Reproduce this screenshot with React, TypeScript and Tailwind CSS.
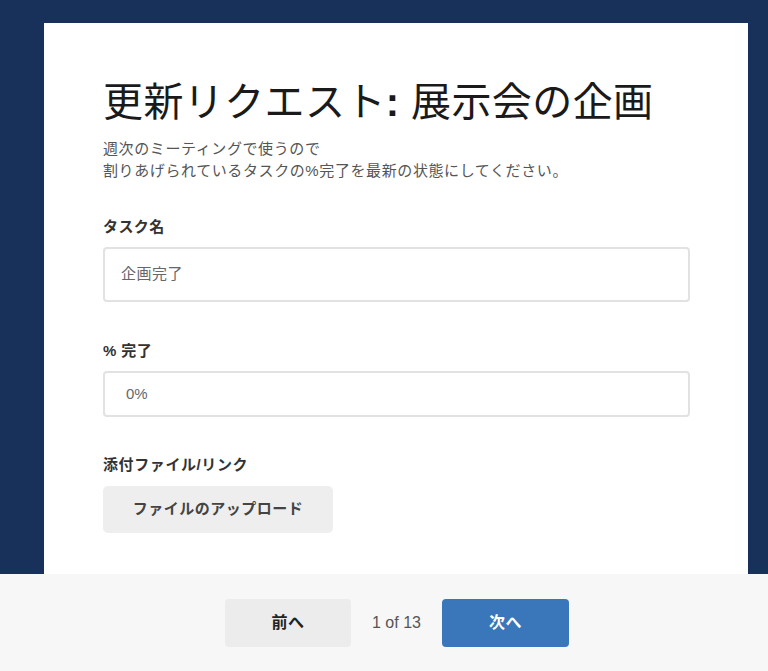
import React from "react";

const font = "font-['Liberation_Sans','Noto_Sans_CJK_JP',sans-serif]";

export default function App() {
  return (
    <div className={`h-[671px] w-full flex flex-col bg-[#17315a] overflow-hidden ${font}`}>
      <div className="flex-1 min-h-0 pt-[23px] pl-[44px] pr-[20px]">
        <div className="h-full w-[704px] bg-white pl-[59px] pr-[58px] pt-[55px]">
          <h1 className="text-[40px] leading-[48px] font-normal text-[#1a1a1a] tracking-[0.4px]">
            更新リクエスト<span className="font-bold">:</span> 展示会の企画
          </h1>
          <p className="mt-[12px] text-[15px] leading-[22px] text-[#555] tracking-[0.6px]">
            週次のミーティングで使うので
            <br />
            割りあげられているタスクの%完了を最新の状態にしてください。
          </p>

          <div className="mt-[34px] text-[15px] leading-[22px] font-bold text-[#333] tracking-[0.4px]">タスク名</div>
          <div className="mt-[9px] h-[55px] border-2 border-[#e2e2e2] rounded-[4px] flex items-center pl-[16px] text-[15px] text-[#66676b] tracking-[0.5px]">
            企画完了
          </div>

          <div className="mt-[38px] text-[15px] leading-[22px] font-bold text-[#333] tracking-[0.4px]">% 完了</div>
          <div className="mt-[9px] h-[46px] border-2 border-[#e2e2e2] rounded-[4px] flex items-center pl-[21px] text-[15px] text-[#66676b]">
            0%
          </div>

          <div className="mt-[37px] text-[15px] leading-[22px] font-bold text-[#333] tracking-[0.6px]">添付ファイル/リンク</div>
          <button className="mt-[10px] w-[230px] h-[47px] bg-[#eeeeee] rounded-[5px] text-[15px] font-bold text-[#444] tracking-[0.5px]">
            ファイルのアップロード
          </button>
        </div>
      </div>
      <div className="h-[97px] shrink-0 bg-[#f7f7f7] flex items-center pl-[225px] gap-[21px]">
        <button className="w-[126px] h-[48px] bg-[#ececec] rounded-[4px] text-[16px] font-bold text-[#222] tracking-[0.5px]">
          前へ
        </button>
        <span className="text-[16px] text-[#555]">1 of 13</span>
        <button className="w-[127px] h-[48px] bg-[#3a76ba] rounded-[4px] text-[16px] font-bold text-white tracking-[0.5px]">
          次へ
        </button>
      </div>
    </div>
  );
}
